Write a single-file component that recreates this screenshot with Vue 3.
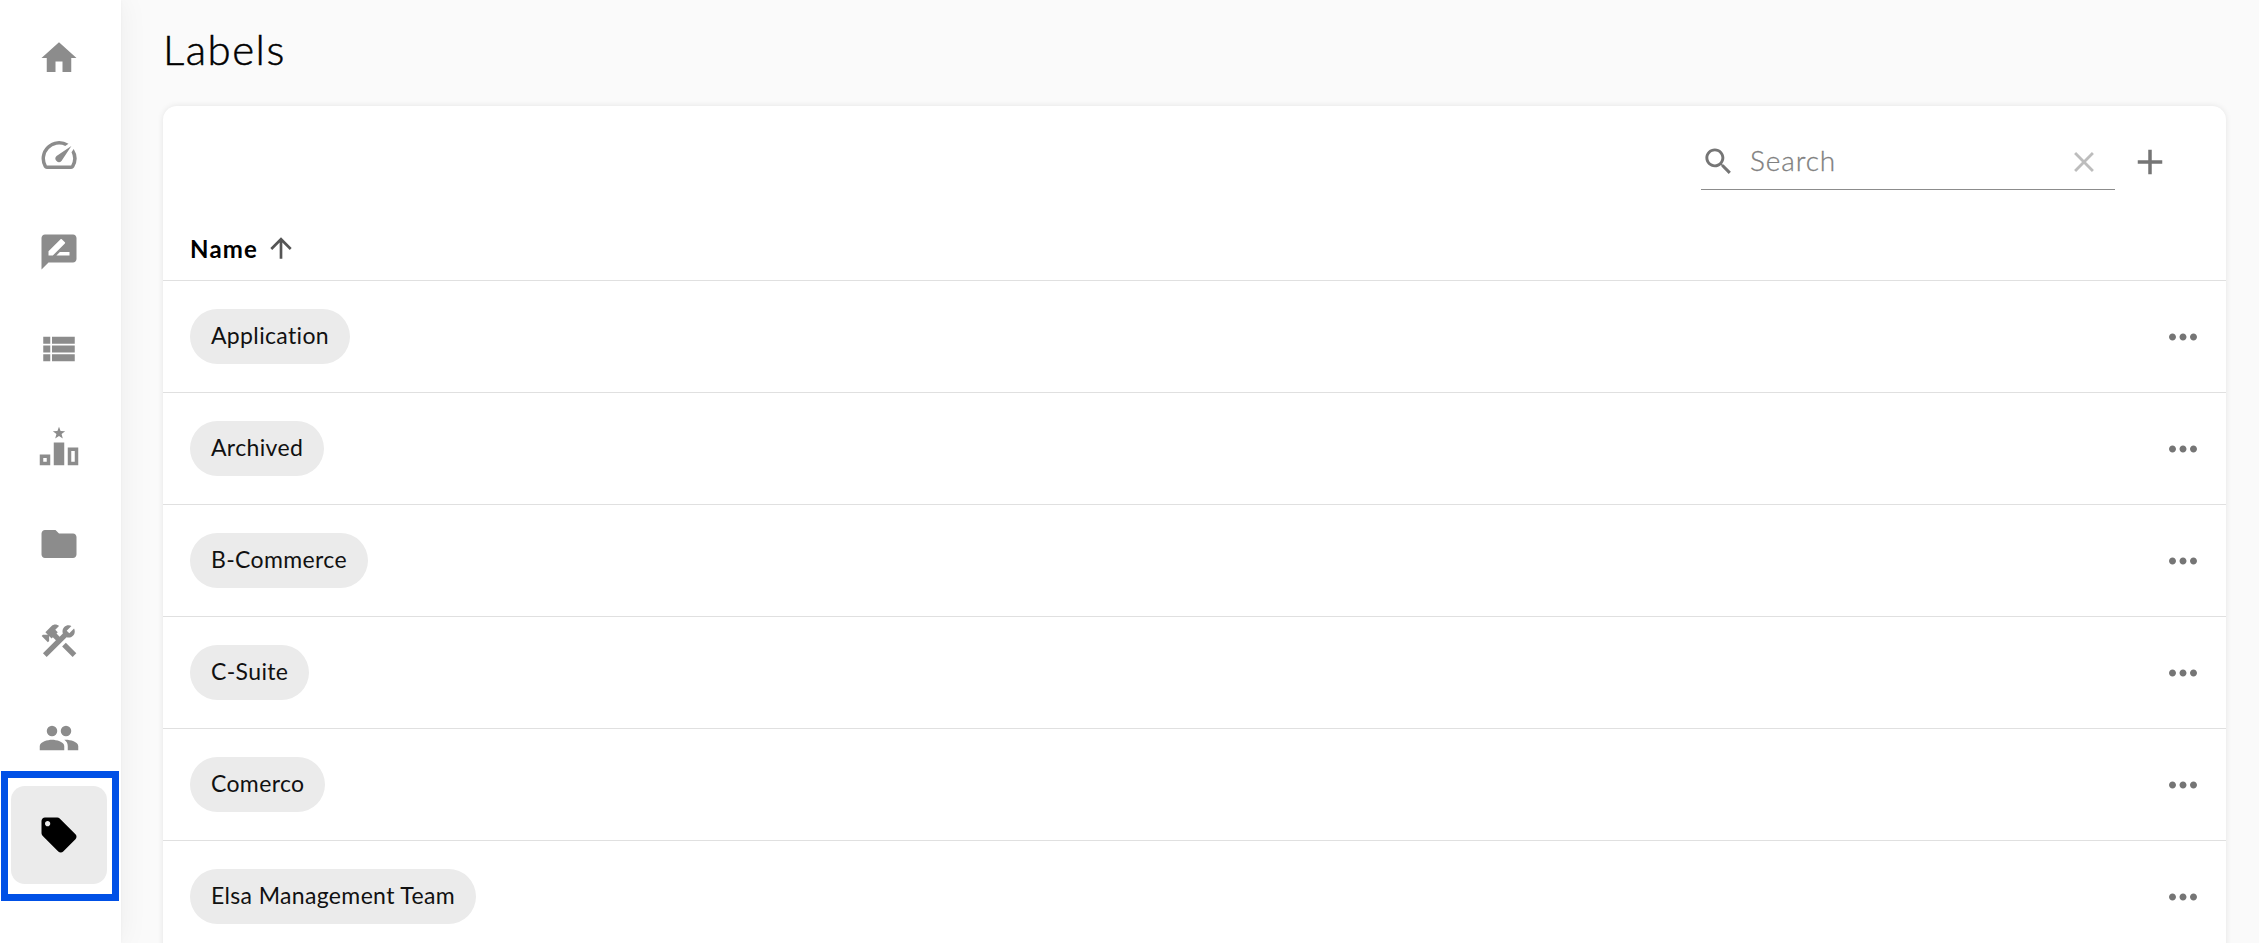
<script setup>
import { ref } from "vue";

const search = ref("");

const navItems = [
  { name: "home", paths: ["M10 20v-6h4v6h5v-8h3L12 3 2 12h3v8z"] },
  {
    name: "dashboard",
    paths: [
      "M20.38 8.57l-1.23 1.85a8 8 0 0 1-.22 7.58H5.07A8 8 0 0 1 15.58 6.85l1.85-1.23A10 10 0 0 0 3.35 19a2 2 0 0 0 1.72 1h13.85a2 2 0 0 0 1.74-1 10 10 0 0 0-.27-10.44z",
      "M10.59 15.41a2 2 0 0 0 2.83 0l5.66-8.49-8.49 5.66a2 2 0 0 0 0 2.83z",
    ],
  },
  {
    name: "reviews",
    paths: [
      "M20 2H4c-1.1 0-2 .9-2 2v18l4-4h14c1.1 0 2-.9 2-2V4c0-1.1-.9-2-2-2zM6 14v-2.47l6.88-6.88c.2-.2.51-.2.71 0l1.77 1.77c.2.2.2.51 0 .71L8.47 14H6zm12 0h-7.5l2-2H18v2z",
    ],
  },
  {
    name: "list",
    paths: ["M3 14h4v-4H3v4zm0 5h4v-4H3v4zM3 9h4V5H3v4zm5 5h13v-4H8v4zm0 5h13v-4H8v4zM8 5v4h13V5H8z"],
  },
  {
    name: "ranking",
    paths: [
      "M1 16.8h6V23H1zm2 2V21h2v-2.2z",
      "M9 10h6v13H9z",
      "M17 12.8h6V23h-6zm2 2V21h2v-6.2z",
      "M12 1l.91 2.45 2.61.11-2.05 1.62.7 2.51L12 6.25l-2.17 1.44.7-2.51-2.05-1.62 2.61-.11z",
    ],
  },
  {
    name: "folder",
    paths: ["M10 4H4c-1.1 0-1.99.9-1.99 2L2 18c0 1.1.9 2 2 2h16c1.1 0 2-.9 2-2V8c0-1.1-.9-2-2-2h-8l-2-2z"],
  },
  {
    name: "tools",
    paths: [
      "M13.78 15.17l2.12-2.12 6 6-2.12 2.12z",
      "M17.5 10c1.93 0 3.5-1.57 3.5-3.5 0-.58-.16-1.12-.41-1.6l-2.7 2.7-1.49-1.49 2.7-2.7c-.48-.25-1.02-.41-1.6-.41C15.57 3 14 4.57 14 6.5c0 .41.08.8.21 1.16l-1.85 1.85-1.78-1.78.71-.71-1.41-1.41L12 3.49c-1.17-1.17-3.07-1.17-4.24 0L4.22 7.03l1.41 1.41H2.81l-.71.71 3.54 3.54.71-.71V9.15l1.41 1.41.71-.71 1.78 1.78-7.41 7.41 2.12 2.12L16.34 9.79c.36.13.75.21 1.16.21z",
    ],
  },
  {
    name: "people",
    paths: [
      "M8 5a3 3 0 1 0 0 6 3 3 0 0 0 0-6z",
      "M16 5a3 3 0 1 0 0 6 3 3 0 0 0 0-6z",
      "M8 13c-2.33 0-7 1.17-7 3.5V19h14v-2.5c0-2.33-4.67-3.5-7-3.5z",
      "M16 13c-.29 0-.62.02-.97.05 1.16.84 1.97 1.97 1.97 3.45V19h6v-2.5c0-2.33-4.67-3.5-7-3.5z",
    ],
  },
  {
    name: "labels",
    active: true,
    paths: [
      "M21.41 11.58l-9-9C12.05 2.22 11.55 2 11 2H4c-1.1 0-2 .9-2 2v7c0 .55.22 1.05.59 1.42l9 9c.36.36.86.58 1.41.58.55 0 1.05-.22 1.41-.59l7-7c.37-.36.59-.86.59-1.41 0-.55-.23-1.06-.59-1.42zM5.5 7C4.67 7 4 6.33 4 5.5S4.67 4 5.5 4 7 4.67 7 5.5 6.33 7 5.5 7z",
    ],
  },
];

const labels = [
  "Application",
  "Archived",
  "B-Commerce",
  "C-Suite",
  "Comerco",
  "Elsa Management Team",
];
</script>

<template>
  <div class="app">
    <nav class="sidebar">
      <a
        v-for="item in navItems"
        :key="item.name"
        class="nav-item"
        :class="{ active: item.active }"
      >
        <svg class="nav-icon" viewBox="0 0 24 24">
          <path v-for="d in item.paths" :key="d" fill-rule="evenodd" :d="d" />
        </svg>
      </a>
    </nav>

    <main class="content">
      <h1 class="title">Labels</h1>

      <section class="card">
        <div class="toolbar">
          <div class="search">
            <svg class="search-icon" viewBox="0 0 24 24">
              <path d="M15.5 14h-.79l-.28-.27C15.41 12.59 16 11.11 16 9.5 16 5.91 13.09 3 9.5 3S3 5.91 3 9.5 5.91 16 9.5 16c1.61 0 3.09-.59 4.23-1.57l.27.28v.79l5 4.99L20.49 19l-4.99-5zm-6 0C7.01 14 5 11.99 5 9.5S7.01 5 9.5 5 14 7.01 14 9.5 11.99 14 9.5 14z" />
            </svg>
            <input v-model="search" type="text" placeholder="Search" />
            <svg class="clear-icon" viewBox="0 0 24 24">
              <path d="M19 6.41L17.59 5 12 10.59 6.41 5 5 6.41 10.59 12 5 17.59 6.41 19 12 13.41 17.59 19 19 17.59 13.41 12z" />
            </svg>
          </div>
          <button class="add">
            <svg viewBox="0 0 24 24">
              <path d="M19 13h-6v6h-2v-6H5v-2h6V5h2v6h6v2z" />
            </svg>
          </button>
        </div>

        <div class="table-head">
          <span>Name</span>
          <svg class="sort-icon" viewBox="0 0 24 24">
            <path d="M4 12l1.41 1.41L11 7.83V20h2V7.83l5.58 5.59L20 12l-8-8-8 8z" />
          </svg>
        </div>

        <div v-for="label in labels" :key="label" class="row">
          <span class="chip">{{ label }}</span>
          <svg class="more-icon" viewBox="0 0 24 24">
            <path d="M6 10c-1.1 0-2 .9-2 2s.9 2 2 2 2-.9 2-2-.9-2-2-2zm12 0c-1.1 0-2 .9-2 2s.9 2 2 2 2-.9 2-2-.9-2-2-2zm-6 0c-1.1 0-2 .9-2 2s.9 2 2 2 2-.9 2-2-.9-2-2-2z" />
          </svg>
        </div>
      </section>
    </main>
  </div>
</template>

<style>
body {
  margin: 0;
  overflow: hidden;
}
</style>

<style scoped>
.app {
  display: flex;
  height: 100vh;
  overflow: hidden;
  background: #fafafa;
  color: #000;
  font-family: Lato, "Open Sans", sans-serif;
}

.app * {
  box-sizing: border-box;
}

.sidebar {
  display: flex;
  flex-direction: column;
  flex: none;
  width: 121px;
  padding: 8.8px 14px 0 11px;
  background: #fff;
  box-shadow: 0 0 28px rgba(0, 0, 0, 0.06), 0 0 3px rgba(0, 0, 0, 0.03);
}

.nav-item {
  position: relative;
  display: flex;
  flex: none;
  align-items: center;
  justify-content: center;
  height: 98px;
  margin-bottom: -0.85px;
  border-radius: 14px;
}

.nav-icon {
  width: 42px;
  height: 42px;
  fill: #8c8c8c;
}

.nav-item.active {
  background: #ebebeb;
}

.nav-item.active .nav-icon {
  fill: #000;
}

/* focus frame around the current page */
.nav-item.active::after {
  content: "";
  position: absolute;
  top: -15px;
  left: -10px;
  box-sizing: border-box;
  width: 118px;
  height: 130px;
  border: 7px solid #0050e6;
}

.content {
  flex: 1;
  padding: 0 33px 0 42px;
}

.title {
  height: 106px;
  margin: 0;
  padding: 24px 0 0;
  font-size: 42px;
  font-weight: 300;
  line-height: 50px;
  letter-spacing: 1.5px;
  -webkit-text-stroke: 0.5px #000;
}

.card {
  height: 900px;
  border-radius: 14px;
  background: #fff;
  box-shadow: 0 0 6px rgba(0, 0, 0, 0.09);
}

.toolbar {
  display: flex;
  align-items: flex-start;
  justify-content: flex-end;
  gap: 14px;
  height: 110px;
  padding: 28px 55px 0 0;
}

.search {
  display: flex;
  align-items: center;
  width: 414px;
  height: 56px;
  padding-right: 14px;
  border-bottom: 1px solid #8c8c8c;
}

.search-icon {
  flex: none;
  width: 35px;
  height: 35px;
  fill: #757575;
}

.search input {
  flex: 1;
  min-width: 0;
  margin-left: 14px;
  padding: 0 0 4px;
  border: 0;
  outline: 0;
  background: none;
  font: 300 28px/40px Lato, sans-serif;
  letter-spacing: 0.9px;
}

.search input::placeholder {
  color: #808080;
  opacity: 1;
  -webkit-text-stroke: 0.3px #808080;
}

.clear-icon {
  flex: none;
  width: 34px;
  height: 34px;
  fill: #bdbdbd;
}

.add {
  display: flex;
  align-items: center;
  height: 56px;
  padding: 0;
  border: 0;
  background: none;
}

.add svg {
  width: 42px;
  height: 42px;
  fill: #757575;
}

.table-head {
  display: flex;
  align-items: center;
  height: 65px;
  padding-left: 27px;
  border-bottom: 1px solid #e0e0e0;
  font-size: 24px;
  font-weight: 700;
  letter-spacing: 1.2px;
}

.sort-icon {
  width: 32px;
  height: 32px;
  margin-left: 7px;
  fill: #555;
}

.row {
  display: flex;
  align-items: center;
  justify-content: space-between;
  height: 112px;
  padding: 0 22px 0 27px;
  border-bottom: 1px solid #e0e0e0;
}

.chip {
  height: 55px;
  padding: 0 21px;
  border-radius: 28px;
  background: #ebebeb;
  color: #111;
  font-size: 23px;
  line-height: 52px;
  letter-spacing: 0.35px;
}

.more-icon {
  width: 42px;
  height: 42px;
  fill: #757575;
}
</style>
